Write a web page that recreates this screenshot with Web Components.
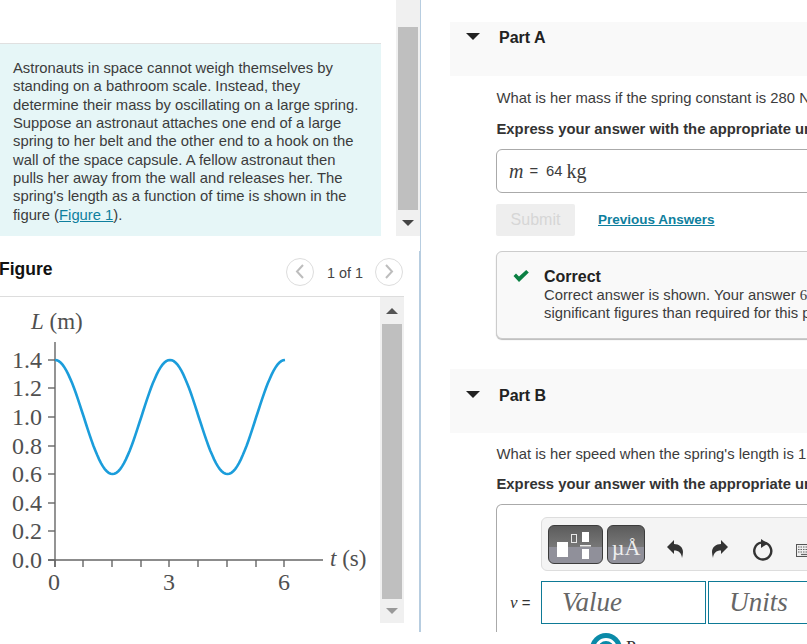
<!DOCTYPE html>
<html lang="en">
<head>
<meta charset="utf-8">
<title>Part A</title>
<style>
  html, body { margin: 0; height: 644px; overflow: hidden; background: #fff; }
  body { font-family: "Liberation Sans", Arial, sans-serif; color: #333; }
</style>
</head>
<body>
<mp-page>
  <mp-left-pane slot="left">
    <mp-statement slot="statement">Astronauts in space cannot weigh themselves by standing on a bathroom scale. Instead, they determine their mass by oscillating on a large spring. Suppose an astronaut attaches one end of a large spring to her belt and the other end to a hook on the wall of the space capsule. A fellow astronaut then pulls her away from the wall and releases her. The spring's length as a function of time is shown in the figure (<a href="#">Figure 1</a>).</mp-statement>
    <mp-figure slot="figure"></mp-figure>
  </mp-left-pane>
  <div slot="right">
    <mp-part name="Part A" band="54" pad="7" q-pad="13">
      <div class="q">What is her mass if the spring constant is 280 <span class="serif">N/m</span>?</div>
      <mp-solved></mp-solved>
    </mp-part>
    <mp-part name="Part B" band="64" pad="18" gap="30" q-pad="12">
      <div class="q">What is her speed when the spring's length is 1.2 m?</div>
      <mp-editor></mp-editor>
    </mp-part>
    <mp-footer></mp-footer>
  </div>
</mp-page>

<script>
// Shared text for the two question blocks, they only differ by what is slotted
const EXPRESS = 'Express your answer with the appropriate units.';

class MpPage extends HTMLElement {
  constructor() {
    super();
    this.attachShadow({ mode: 'open' });
    this.shadowRoot.innerHTML = `
      <style>
        :host { display: flex; width: 807px; height: 644px; overflow: hidden; }
        .left { display: block; flex: 0 0 421px; }
        .right { display: block; flex: 0 0 386px; overflow: hidden; }
      </style>
      <div class="left"><slot name="left"></slot></div>
      <div class="right"><slot name="right"></slot></div>
    `;
  }
}

class MpScrollbar extends HTMLElement {
  constructor() {
    super();
    this.attachShadow({ mode: 'open' });
  }

  connectedCallback() {
    const up = this.getAttribute('up') || 27;
    const thumb = this.getAttribute('thumb') || 100;
    const height = this.getAttribute('height') || 200;
    const upColor = this.getAttribute('up-color');
    const downColor = this.getAttribute('down-color') || '#444';
    this.shadowRoot.innerHTML = `
      <style>
        :host { display: flex; flex-direction: column; flex: none; width: 24px; height: ${height}px; background: #f0f0f0; }
        .btn { display: flex; align-items: center; justify-content: center; }
        .up { height: ${up}px; }
        .down { flex: 1; }
        .thumb { height: ${thumb}px; margin: 0 2px; background: #bfbfbf; }
        .arrow-up { width: 0; height: 0; border: 6px solid transparent; border-top: 0; border-bottom: 6px solid ${upColor}; }
        .arrow-down { width: 0; height: 0; border: 6px solid transparent; border-bottom: 0; border-top: 6px solid ${downColor}; }
      </style>
      <div class="btn up">${upColor ? '<div class="arrow-up"></div>' : ''}</div>
      <div class="thumb"></div>
      <div class="btn down"><div class="arrow-down"></div></div>
    `;
  }
}

class MpLeftPane extends HTMLElement {
  constructor() {
    super();
    this.attachShadow({ mode: 'open' });
    this.shadowRoot.innerHTML = `
      <style>
        :host { display: block; width: 421px; height: 632px; box-sizing: border-box; border-right: 1px solid #b7cde0; }
        .top { display: flex; height: 251px; align-items: flex-start; }
        .top-main { flex: 0 0 396px; padding-top: 43px; box-sizing: border-box; }
      </style>
      <div class="top">
        <div class="top-main"><slot name="statement"></slot></div>
        <mp-scrollbar up="27" thumb="183" height="236"></mp-scrollbar>
      </div>
      <slot name="figure"></slot>
    `;
  }
}

class MpStatement extends HTMLElement {
  constructor() {
    super();
    this.attachShadow({ mode: 'open' });
    this.shadowRoot.innerHTML = `
      <style>
        :host { display: block; width: 381px; height: 193px; box-sizing: border-box; padding: 15px 18px 0 13px; background: #e6f6f7; border-top: 1px solid #e0e0e0; font-size: 14.8px; line-height: 18.33px; color: #3c3c3c; }
        ::slotted(a) { color: #0e7f9e; text-decoration: underline; }
      </style>
      <slot></slot>
    `;
  }
}

class MpFigure extends HTMLElement {
  constructor() {
    super();
    this.attachShadow({ mode: 'open' });
  }

  curve() {
    // L = 1.0 + 0.4 cos(2 pi t / 3), from t = 0 to 6 s
    const pts = [];
    for (let t = 0; t <= 6.001; t += 0.05) {
      const x = 55 + (t / 6) * 230;
      const y = 417 - 57 * Math.cos((2 * Math.PI * t) / 3);
      pts.push(x.toFixed(1) + ',' + y.toFixed(1));
    }
    return pts.join(' ');
  }

  connectedCallback() {
    const yTicks = [['1.4', 360], ['1.2', 388], ['1.0', 417], ['0.8', 446], ['0.6', 474], ['0.4', 503], ['0.2', 531], ['0.0', 560]];
    const xTicks = [55, 83, 112, 141, 169, 198, 227, 256, 284];
    const yMarks = yTicks.map(([label, y]) => `
      <line x1="48" x2="55" y1="${y}" y2="${y}"/>
      <text class="num" x="42" y="${y + 8}" text-anchor="end" stroke="none">${label}</text>`).join('');
    const xMarks = xTicks.map((x) => `<line x1="${x}" x2="${x}" y1="560" y2="567"/>`).join('');
    this.shadowRoot.innerHTML = `
      <style>
        :host { display: block; width: 420px; height: 381px; box-sizing: border-box; border-right: 1px solid #b7cde0; }
        .head { display: flex; width: 404px; height: 46px; box-sizing: border-box; border-bottom: 1px solid #ddd; padding-right: 1px; }
        h2 { margin: 8px 0 0 -1px; flex: 1; font-size: 17.5px; line-height: 20px; font-weight: 700; color: #111; }
        .pager { display: flex; align-items: center; height: 28px; margin-top: 7px; font-size: 14.4px; color: #444; }
        .pager span { margin: 1px 12px 0 13px; }
        .round { width: 28px; height: 28px; box-sizing: border-box; border: 1px solid #ddd; border-radius: 50%; }
        .round svg { display: block; }
        .body { display: flex; width: 404px; height: 326px; }
        .plot { flex: 0 0 380px; height: 326px; display: block; }
        text { font-family: "Liberation Serif", "Times New Roman", serif; fill: #505050; }
        .num { font-size: 24px; }
        .label { font-size: 23px; }
        .axes line { stroke: #666; stroke-width: 1.4; }
      </style>
      <div class="head">
        <h2>Figure</h2>
        <div class="pager">
          <div class="round"><svg width="26" height="26" viewBox="0 0 26 26"><path d="M16 6 L10 12.5 L16 19" fill="none" stroke="#bdbdbd" stroke-width="2"/></svg></div>
          <span>1 of 1</span>
          <div class="round"><svg width="26" height="26" viewBox="0 0 26 26"><path d="M10 6 L16 12.5 L10 19" fill="none" stroke="#bdbdbd" stroke-width="2"/></svg></div>
        </div>
      </div>
      <div class="body">
        <svg class="plot" viewBox="0 297 380 326">
          <g class="axes">
            <line x1="55" x2="55" y1="342" y2="567"/>
            <line x1="48" x2="323" y1="560" y2="560"/>
            ${yMarks}
            ${xMarks}
          </g>
          <polyline points="${this.curve()}" fill="none" stroke="#1b9ddb" stroke-width="2.6"/>
          <text class="label" x="31" y="329"><tspan font-style="italic">L</tspan> (m)</text>
          <text class="label" x="330" y="566"><tspan font-style="italic">t</tspan> (s)</text>
          <text class="num" x="54" y="590" text-anchor="middle">0</text>
          <text class="num" x="169" y="590" text-anchor="middle">3</text>
          <text class="num" x="284" y="590" text-anchor="middle">6</text>
        </svg>
        <mp-scrollbar up="27" thumb="275" height="326" up-color="#555" down-color="#999"></mp-scrollbar>
      </div>
    `;
  }
}

class MpPart extends HTMLElement {
  constructor() {
    super();
    this.attachShadow({ mode: 'open' });
  }

  connectedCallback() {
    const band = this.getAttribute('band');
    const pad = this.getAttribute('pad');
    const gap = this.getAttribute('gap') || 22;
    const qPad = this.getAttribute('q-pad') || 13;
    this.shadowRoot.innerHTML = `
      <style>
        :host { display: block; padding-top: ${gap}px; padding-left: 29px; width: 600px; box-sizing: border-box; }
        .band { display: flex; align-items: flex-start; height: ${band}px; box-sizing: border-box; padding: ${pad}px 0 0 16px; background: #f9f9f9; }
        .tri { width: 0; height: 0; margin: 4px 19px 0 0; border: 7px solid transparent; border-bottom: 0; border-top: 7px solid #222; }
        h3 { margin: 0; font-size: 16px; line-height: 18px; font-weight: 700; color: #222; }
        .content { padding-left: 46px; font-size: 14.8px; line-height: 18px; color: #3c3c3c; }
        ::slotted(.q) { padding: ${qPad}px 0 0 0.5px; white-space: nowrap; }
      </style>
      <div class="band"><div class="tri"></div><h3>${this.getAttribute('name')}</h3></div>
      <div class="content"><slot></slot></div>
    `;
  }
}

class MpSolved extends HTMLElement {
  constructor() {
    super();
    this.attachShadow({ mode: 'open' });
    this.shadowRoot.innerHTML = `
      <style>
        :host { display: block; }
        .express { margin: 13px 0 11px 0.5px; font-weight: 700; white-space: nowrap; color: #333; }
        .answer { display: flex; align-items: center; height: 44px; box-sizing: border-box; padding-left: 12px; border: 1px solid #aaa; border-radius: 6px; white-space: nowrap; }
        i, .kg { font-family: "Liberation Serif", serif; font-size: 20px; }
        .eq { margin: 0 8px 0 6px; }
        .kg { margin-left: 4px; }
        .row { display: flex; align-items: center; margin-top: 11px; height: 32px; }
        .submit { width: 79px; height: 32px; box-sizing: border-box; border-radius: 2px; background: #eee; color: #d6d6d6; font-size: 16px; line-height: 32px; text-align: center; }
        a { margin-left: 23px; font-size: 13.5px; font-weight: 700; color: #0e7f9e; text-decoration: underline; }
        .feedback { display: flex; height: 88px; box-sizing: border-box; margin-top: 15px; padding: 15px 0 0 16px; border: 1px solid #ccc; border-radius: 6px; background: #f9f9f9; box-shadow: 0 1px 1px #bbb; white-space: nowrap; }
        .feedback svg { flex: none; margin: 3px 15px 0 0; }
        b { display: block; font-size: 16px; line-height: 19px; color: #222; }
        .serif { font-family: "Liberation Serif", serif; }
      </style>
      <div class="express">${EXPRESS}</div>
      <div class="answer"><i>m</i><span class="eq">=</span><span>64</span><span class="kg">kg</span></div>
      <div class="row"><div class="submit">Submit</div><a href="#">Previous Answers</a></div>
      <div class="feedback">
        <svg width="16" height="12" viewBox="0 0 16 12"><path d="M0.5 6 L3 3.6 L6 6.6 L13.2 0 L15.8 2.4 L6 12 Z" fill="#0b8043"/></svg>
        <div>
          <b>Correct</b>
          Correct answer is shown. Your answer <span class="serif">64</span> was either rounded differently or used a different number of<br>
          significant figures than required for this part.
        </div>
      </div>
    `;
  }
}

class MpToolbar extends HTMLElement {
  constructor() {
    super();
    this.attachShadow({ mode: 'open' });
    this.shadowRoot.innerHTML = `
      <style>
        :host { display: flex; align-items: center; width: 330px; height: 54px; box-sizing: border-box; padding-left: 6px; background: #f4f4f4; border: 1px solid #ddd; border-radius: 6px; }
        .btn { flex: none; height: 39px; box-sizing: border-box; border: 1px solid #3c3c3c; border-radius: 6px; background: linear-gradient(#5c5c5c, #787878 58%, #90909a 58%, #90909a); }
        .tpl { width: 55px; margin-right: 4px; }
        .tpl svg { display: block; margin: -1px; }
        .unit { display: flex; align-items: flex-end; justify-content: center; width: 38px; color: #eee; font-family: "Liberation Serif", serif; font-size: 22px; line-height: 30px; }
        .tool { flex: none; display: block; }
      </style>
      <div class="btn tpl">
        <svg width="55" height="39" viewBox="0 0 55 39">
          <rect x="9" y="17" width="11" height="15" fill="#fff"/>
          <rect x="23.5" y="9.5" width="5" height="8" fill="none" stroke="#e8e8e8"/>
          <rect x="34" y="7" width="7" height="10" fill="#fff"/>
          <rect x="32" y="20" width="11" height="1.5" fill="#eee"/>
          <rect x="34" y="24" width="7" height="10" fill="#fff"/>
        </svg>
      </div>
      <div class="btn unit">µÅ</div>
      <svg class="tool" style="margin:10px 0 0 22px" width="16" height="18" viewBox="0 0 16 18"><path d="M0 7 L7 0 V4 C12 4 16 7 16 12 C16 14 15.5 16 15 18 C14.5 13 12 10.5 7 10.5 V14 Z" fill="#333"/></svg>
      <svg class="tool" style="margin:10px 0 0 29px" width="16" height="18" viewBox="0 0 16 18"><path d="M16 7 L9 0 V4 C4 4 0 7 0 12 C0 14 .5 16 1 18 C1.5 13 4 10.5 9 10.5 V14 Z" fill="#333"/></svg>
      <svg class="tool" style="margin:12px 0 0 25px" width="20" height="22" viewBox="0 0 20 22"><path d="M8 3.7 A8.5 8.5 0 1 0 11 3.6" fill="none" stroke="#333" stroke-width="2.4"/><path d="M8 0 L15 4.5 L8 9 Z" fill="#333"/></svg>
      <svg class="tool" style="margin:12px 0 0 23px" width="20" height="13" viewBox="0 0 20 13">
        <rect x=".5" y=".5" width="19" height="12" fill="#eee" stroke="#555"/>
        <path d="M2 3 H18 M2 5.5 H18 M2 8 H18" stroke="#666" stroke-width="1.2" stroke-dasharray="1.5 1"/>
        <path d="M5 10.5 H15" stroke="#666" stroke-width="1.2"/>
      </svg>
    `;
  }
}

class MpEditor extends HTMLElement {
  constructor() {
    super();
    this.attachShadow({ mode: 'open' });
    this.shadowRoot.innerHTML = `
      <style>
        :host { display: block; }
        .express { margin: 12px 0 11px 0.5px; font-weight: 700; white-space: nowrap; color: #333; }
        .box { height: 128px; box-sizing: border-box; padding: 12px 0 0 44px; border: 1px solid #aaa; border-bottom: 0; border-radius: 6px 6px 0 0; }
        .fields { display: flex; align-items: center; margin-top: 10px; margin-left: -32px; }
        .sym { width: 31px; padding-left: 1px; font-size: 15px; white-space: nowrap; color: #333; }
        .sym i { font-family: "Liberation Serif", serif; font-size: 17px; }
        .field { flex: none; width: 165px; height: 43px; box-sizing: border-box; margin-right: 2.3px; padding-left: 20px; border: 1.5px solid #0e7a96; font-family: "Liberation Serif", serif; font-size: 27px; font-style: italic; line-height: 41px; color: #666; }
      </style>
      <div class="express">${EXPRESS}</div>
      <div class="box">
        <mp-toolbar></mp-toolbar>
        <div class="fields">
          <div class="sym"><i>v</i> =</div>
          <div class="field">Value</div>
          <div class="field">Units</div>
        </div>
      </div>
    `;
  }
}

class MpFooter extends HTMLElement {
  constructor() {
    super();
    this.attachShadow({ mode: 'open' });
    this.shadowRoot.innerHTML = `
      <style>
        :host { display: flex; height: 40px; padding: 1px 0 0 169px; font-family: "Liberation Serif", serif; font-size: 18px; color: #333; }
        svg { display: block; flex: none; margin-right: 4px; }
        span { margin-top: 5px; line-height: 20px; }
      </style>
      <svg width="32" height="32" viewBox="0 0 32 32"><circle cx="16" cy="16" r="16" fill="#0a8aa8"/><circle cx="16" cy="16" r="9.5" fill="none" stroke="#fff" stroke-width="3"/></svg>
      <span>P</span>
    `;
  }
}

customElements.define('mp-page', MpPage);
customElements.define('mp-scrollbar', MpScrollbar);
customElements.define('mp-left-pane', MpLeftPane);
customElements.define('mp-statement', MpStatement);
customElements.define('mp-figure', MpFigure);
customElements.define('mp-part', MpPart);
customElements.define('mp-solved', MpSolved);
customElements.define('mp-toolbar', MpToolbar);
customElements.define('mp-editor', MpEditor);
customElements.define('mp-footer', MpFooter);
</script>
</body>
</html>
